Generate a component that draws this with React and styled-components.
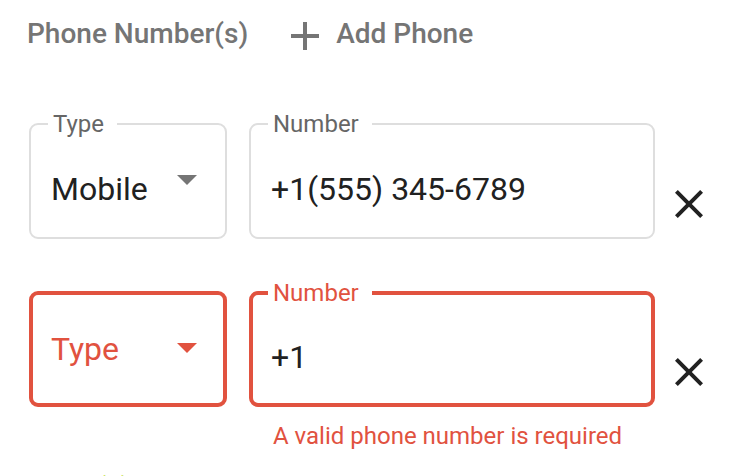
import React from 'react';
import styled, { createGlobalStyle } from 'styled-components';

const RED = '#e1523f';
const GRAY_BORDER = '#dedede';

const Global = createGlobalStyle`
  html, body { margin: 0; padding: 0; background: #fff; }
  body { font-family: Roboto, "Noto Sans", "Liberation Sans", sans-serif; }
`;

const Page = styled.div`
  box-sizing: border-box;
  width: 744px;
  height: 476px;
  overflow: hidden;
  padding: 12px 0 0 29px;
`;

const Header = styled.div`
  display: flex;
  align-items: flex-start;
  height: 48px;
  margin-left: -2px;
`;

const Title = styled.h2`
  margin: 6px 0 0;
  font-size: 28px;
  font-weight: 500;
  line-height: 32px;
  color: #757575;
`;

const AddButton = styled.button`
  display: flex;
  align-items: flex-start;
  margin-left: 33px;
  padding: 0;
  border: 0;
  background: none;
  color: #757575;
  font: inherit;
  cursor: pointer;
`;

const AddLabel = styled.span`
  margin: 6px 0 0 7px;
  font-size: 28px;
  font-weight: 500;
  line-height: 32px;
`;

const Icon = styled.svg`
  display: block;
  flex: none;
  width: 48px;
  height: 48px;
  fill: ${(p) => p.$color || 'currentColor'};
`;

const Row = styled.div`
  display: flex;
  align-items: flex-start;
  margin-top: ${(p) => p.$mt}px;
`;

const Column = styled.div`
  display: flex;
  flex-direction: column;
  margin-left: 22px;
`;

const Field = styled.div`
  position: relative;
  box-sizing: border-box;
  display: flex;
  align-items: flex-start;
  width: ${(p) => p.$w}px;
  height: 116px;
  border: ${(p) => (p.$error ? 4 : 2)}px solid ${(p) => (p.$error ? RED : GRAY_BORDER)};
  border-radius: 9px;
  padding-left: ${(p) => (p.$error ? 18 : 20)}px;
`;

const Legend = styled.label`
  position: absolute;
  top: ${(p) => (p.$error ? -15.7 : -14.7)}px;
  left: ${(p) => (p.$error ? 15 : 17)}px;
  padding: 0 13px 0 5px;
  background: #fff;
  font-size: 24px;
  line-height: 28px;
  color: ${(p) => (p.$error ? RED : '#666666')};
`;

const Value = styled.span`
  margin-top: ${(p) => (p.$error ? 42 : 44)}px;
  font-size: 32px;
  line-height: 40px;
  color: #212121;
`;

const Placeholder = styled.span`
  margin-top: ${(p) => (p.$error ? 34 : 36)}px;
  font-size: 32px;
  line-height: 40px;
  color: ${RED};
`;

const SelectIcon = styled(Icon)`
  margin: ${(p) => (p.$error ? 28 : 30)}px ${(p) => (p.$error ? 12 : 14)}px 0 auto;
`;

const Helper = styled.div`
  margin: 13px 0 0 24px;
  font-size: 24px;
  line-height: 32px;
  color: ${RED};
`;

const RemoveButton = styled.button`
  display: block;
  margin: 57px 0 0 10px;
  padding: 0;
  border: 0;
  background: none;
  color: #212121;
  cursor: pointer;
`;

const NextSection = styled.h2`
  margin: 20px 0 0 -2px;
  font-size: 28px;
  font-weight: 500;
  line-height: 32px;
  color: #c9e24e;
`;

const AddIcon = () => (
  <Icon viewBox="0 0 24 24">
    <path d="M19 13h-6v6h-2v-6H5v-2h6V5h2v6h6v2z" />
  </Icon>
);

const CloseIcon = () => (
  <Icon viewBox="0 0 24 24">
    <path d="M19 6.41 17.59 5 12 10.59 6.41 5 5 6.41 10.59 12 5 17.59 6.41 19 12 13.41 17.59 19 19 17.59 13.41 12z" />
  </Icon>
);

const Arrow = ({ error }) => (
  <SelectIcon viewBox="0 0 24 24" $error={error} $color={error ? RED : '#757575'}>
    <path d="M7 10l5 5 5-5z" />
  </SelectIcon>
);

const phones = [
  { type: 'Mobile', number: '+1(555) 345-6789', error: false },
  { type: '', number: '+1', error: true },
];

export default function App() {
  return (
    <>
      <Global />
      <Page>
        <Header>
          <Title>Phone Number(s)</Title>
          <AddButton>
            <AddIcon />
            <AddLabel>Add Phone</AddLabel>
          </AddButton>
        </Header>
        {phones.map((ph, i) => (
          <Row key={i} $mt={i === 0 ? 63 : 52}>
            <Field $w={198} $error={ph.error}>
              {ph.type ? (
                <>
                  <Legend>Type</Legend>
                  <Value>{ph.type}</Value>
                </>
              ) : (
                <Placeholder $error>Type</Placeholder>
              )}
              <Arrow error={ph.error} />
            </Field>
            <Column>
              <Field $w={406} $error={ph.error}>
                <Legend $error={ph.error}>Number</Legend>
                <Value $error={ph.error}>{ph.number}</Value>
              </Field>
              {ph.error && <Helper>A valid phone number is required</Helper>}
            </Column>
            <RemoveButton aria-label="Remove phone">
              <CloseIcon />
            </RemoveButton>
          </Row>
        ))}
        <NextSection>Email(s)</NextSection>
      </Page>
    </>
  );
}
